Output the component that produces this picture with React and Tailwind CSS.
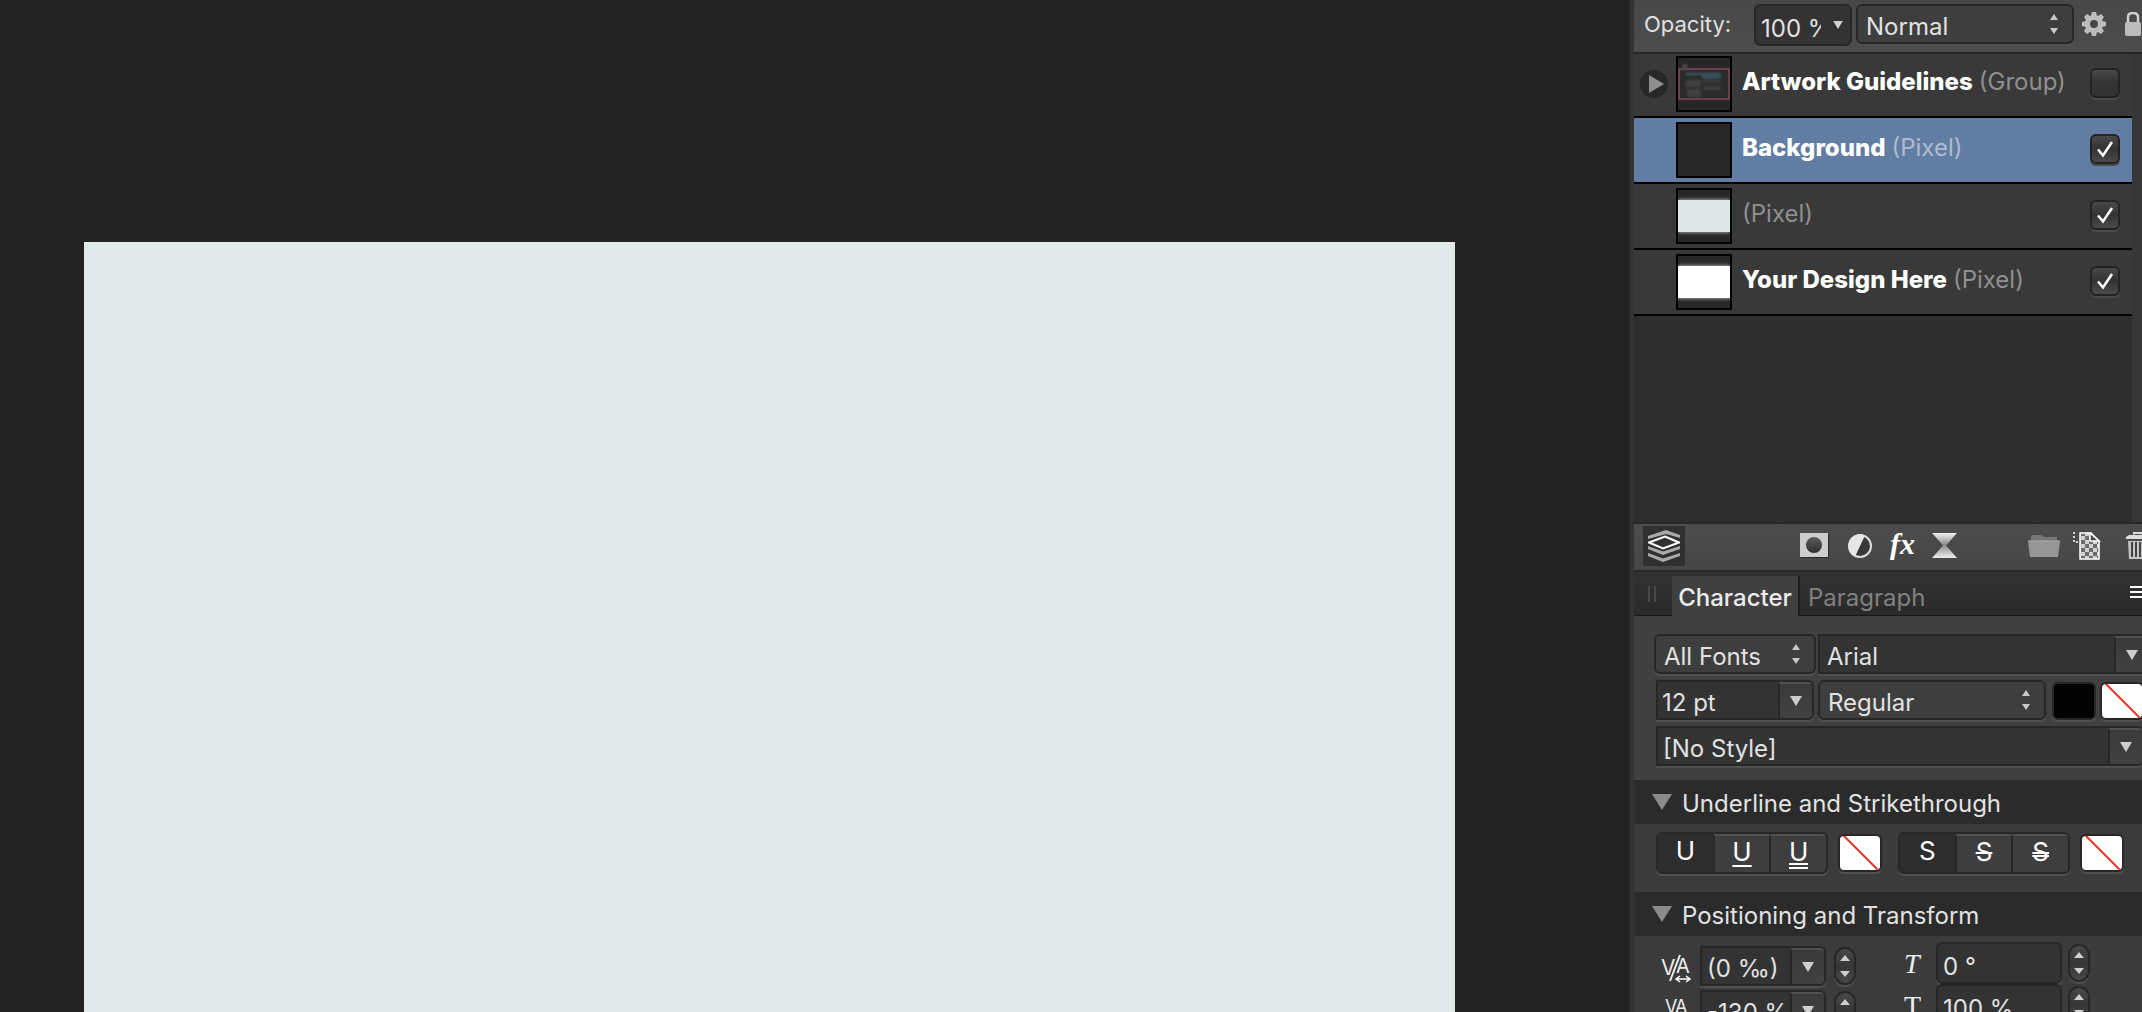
import React from 'react';
import clsx from 'clsx';

const LAYERS = [
  { id: 'guides', name: 'Artwork Guidelines', kind: '(Group)', thumb: 'guides', visible: false, group: true },
  { id: 'background', name: 'Background', kind: '(Pixel)', thumb: 'dark', visible: true, selected: true },
  { id: 'pixel', name: '', kind: '(Pixel)', thumb: 'mint', visible: true },
  { id: 'design', name: 'Your Design Here', kind: '(Pixel)', thumb: 'white', visible: true },
];

const BOX = 'border-2 border-[#272727] shadow-[0_2px_0_#505050]';

function Caret({ className }) {
  return (
    <svg viewBox="0 0 12 10" className={clsx('shrink-0', className)} fill="#cfcfcf">
      <path d="M0 0h12L6 10z" />
    </svg>
  );
}

function UpDown({ className }) {
  return (
    <svg viewBox="0 0 8 20" className={clsx('h-5 w-2 shrink-0', className)} fill="#c8c8c8">
      <path d="M0 6h8L4 0zM0 14h8l-4 6z" />
    </svg>
  );
}

function Select({ label, value, className }) {
  return (
    <div className={clsx('relative h-10 shrink-0', className)}>
      <select
        aria-label={label}
        defaultValue={value}
        className={clsx(BOX, 'h-full w-full appearance-none rounded-md bg-[#3e3e3e] pt-[6px] pl-2 text-2xl leading-7 text-[#e2e2e2] outline-none')}
      >
        <option>{value}</option>
      </select>
      <UpDown className="pointer-events-none absolute top-[10px] right-4" />
    </div>
  );
}

function Combo({ label, value, className, inputClass = 'pl-2' }) {
  return (
    <div className={clsx(BOX, 'flex h-10 shrink-0 overflow-hidden rounded-r-md bg-[#333]', className)}>
      <input
        aria-label={label}
        defaultValue={value}
        className={clsx('min-w-0 flex-1 bg-transparent pt-[6px] text-2xl leading-7 text-[#e2e2e2] outline-none', inputClass)}
      />
      <button
        aria-label={`${label} options`}
        className="flex w-[34px] shrink-0 items-center justify-center border-t-2 border-l-2 border-t-[#505050] border-l-[#272727] bg-linear-to-b from-[#3a3a3a] to-[#424242]"
      >
        <Caret className="h-[10px] w-3" />
      </button>
    </div>
  );
}

function Stepper({ label }) {
  return (
    <button aria-label={label} className={clsx(BOX, 'flex h-[38px] w-[22px] shrink-0 items-center justify-center rounded-full bg-linear-to-b from-[#484848] via-[#363636] to-[#484848]')}>
      <svg viewBox="0 0 10 22" className="h-[22px] w-[10px] shrink-0" fill="#cfcfcf">
        <path d="M0 6h10L5 0zM0 16h10l-5 6z" />
      </svg>
    </button>
  );
}

function NoneSwatch({ label }) {
  return (
    <button aria-label={label} className={clsx(BOX, 'block h-[38px] w-11 shrink-0 overflow-hidden rounded-md bg-white')}>
      <svg viewBox="0 0 40 34" className="h-full w-full">
        <path d="M3 -1L39 35" stroke="#ee3124" strokeWidth="2" />
      </svg>
    </button>
  );
}

function Thumb({ type }) {
  return (
    <div className="flex size-14 shrink-0 items-center overflow-hidden border-2 border-black bg-[#272727]">
      {type === 'guides' && (
        <svg viewBox="0 0 52 52" className="size-[52px]">
          <defs>
            <filter id="soft"><feGaussianBlur stdDeviation="1" /></filter>
          </defs>
          <rect x="1" y="11" width="50" height="30" fill="#2b2b2c" stroke="#87455f" strokeWidth="1.5" />
          <g filter="url(#soft)">
            <path d="M8 16h34" stroke="#3c5f6b" strokeWidth="2" />
            <path d="M24 19h19" stroke="#3f6974" strokeWidth="2" />
            <path d="M8 22h15v7H8zM8 31h15v8H10z" fill="#404142" />
            <path d="M25 22h17v3H25zM25 28h18v4H25z" fill="#3c3d3f" />
            <circle cx="7" cy="9" r="3" fill="#4a4a4a" />
          </g>
        </svg>
      )}
      {type === 'mint' && <div className="h-8 w-full bg-[#e0e7e8] shadow-[0_0_4px_#c8d0d0]" />}
      {type === 'white' && <div className="h-8 w-full bg-white shadow-[0_0_4px_#dddddd]" />}
    </div>
  );
}

function LayerRow({ layer }) {
  return (
    <li
      className={clsx(
        'flex h-[66px] items-end border-b-2 border-black pr-3 first:h-16',
        layer.selected ? 'bg-[#617da4]' : 'bg-[#393939]'
      )}
    >
      <div className="w-[42px] shrink-0 self-end pb-[18px] pl-[6px]">
        {layer.group && (
          <button aria-label="Expand group" className="flex size-7 items-center justify-center rounded-full bg-[#282828]">
            <svg viewBox="0 0 28 28" className="size-7" fill="#8e8e8e">
              <path d="M9 5v18l15-9z" />
            </svg>
          </button>
        )}
      </div>
      <div className="pb-1">
        <Thumb type={layer.thumb} />
      </div>
      <label htmlFor={layer.id} className="flex-1 pb-[18px] pl-[10px] text-2xl leading-8 whitespace-nowrap">
        {layer.name && <span className="mr-[6px] font-extrabold text-white">{layer.name}</span>}
        <span className={layer.selected ? 'text-[#aebbd0]' : 'text-[#8f8f8f]'}>{layer.kind}</span>
      </label>
      <div className="relative mb-[18px] size-[30px] shrink-0">
        <input
          id={layer.id}
          type="checkbox"
          defaultChecked={layer.visible}
          className="peer block size-[30px] appearance-none rounded-md border-2 border-[#232323] bg-linear-to-b from-[#484848] via-[#343434] to-[#333] shadow-[0_2px_0_#4a4a4a] checked:to-[#4a4a4a]"
        />
        <svg viewBox="0 0 30 30" className="pointer-events-none absolute inset-0 hidden size-[30px] peer-checked:block" fill="none" stroke="white" strokeWidth="2.5">
          <path d="M8 15.500l5 6L22 8" />
        </svg>
      </div>
    </li>
  );
}

function LayersIcon() {
  return (
    <svg viewBox="0 0 32 32" className="size-8">
      <path d="M0 6L18 0l14 5v3L18 4 0 9z" fill="#a9a9a9" />
      <path d="M17 6.500L31 12.500 15 18.500 1 12.500z" fill="#303030" stroke="#fff" strokeWidth="2" />
      <path d="M0 16l15 5.500L32 16v3l-17 6-15-6zM0 23l15 5.500L32 23v3l-17 6-15-6z" fill="#a9a9a9" />
    </svg>
  );
}

function MaskIcon() {
  return (
    <svg viewBox="0 0 30 26" className="h-[26px] w-[30px]">
      <defs>
        <linearGradient id="ball" x1="0" y1="0" x2="0" y2="1">
          <stop offset="0" stopColor="#5c5c5c" />
          <stop offset="1" stopColor="#2f2f2f" />
        </linearGradient>
      </defs>
      <path d="M1 1h28v24H1z" fill="#292929" />
      <path d="M0 0h28v24H0z" fill="#cdcdcd" />
      <circle cx="14" cy="12" r="8" fill="url(#ball)" />
    </svg>
  );
}

function AdjustIcon() {
  return (
    <svg viewBox="0 0 26 26" className="size-[26px]">
      <circle cx="12" cy="13" r="11" fill="#393939" stroke="#ddd" strokeWidth="2" />
      <path d="M17 2.500A11.500 11.500 0 1 0 7 23.500z" fill="#e6e6e6" />
    </svg>
  );
}

function HourglassIcon() {
  return (
    <svg viewBox="0 0 26 26" className="size-[26px]">
      <defs>
        <linearGradient id="glass" x1="0" y1="0" x2="0" y2="1">
          <stop offset="0" stopColor="#f2f2f2" />
          <stop offset=".48" stopColor="#8a8a8a" />
          <stop offset="1" stopColor="#eee" />
        </linearGradient>
      </defs>
      <path d="M0 0h25L14 12.500 25 25H0l11-12.500z" fill="url(#glass)" />
    </svg>
  );
}

function FolderIcon() {
  return (
    <svg viewBox="0 0 32 24" className="h-6 w-8">
      <path d="M3 8V3l1-2h10l2 2h13v5z" fill="#777" />
      <path d="M0 7h32l-2 16H2z" fill="#969696" />
      <path d="M0 7h32" stroke="#adadad" />
    </svg>
  );
}

function NewPixelIcon() {
  return (
    <svg viewBox="0 0 28 28" className="size-7">
      <defs>
        <pattern id="checker" width="8" height="8" patternUnits="userSpaceOnUse">
          <path d="M0 0h8v8H0z" fill="#d0d0d0" />
          <path d="M0 0h4v4H0zM4 4h4v4H4z" fill="#6c6c6c" />
        </pattern>
      </defs>
      <path d="M7 1h11l8 8v18H7z" fill="url(#checker)" stroke="#fff" strokeWidth="1.500" />
      <path d="M17 1v8h9z" fill="#444" stroke="#fff" strokeWidth="1.500" />
      <path d="M1 0v10h6" fill="none" stroke="#fff" strokeWidth="1.500" strokeDasharray="2 2" />
    </svg>
  );
}

function TrashIcon() {
  return (
    <svg viewBox="0 0 24 28" className="h-7 w-6">
      <path d="M8 2.500V1h8v1.500" fill="none" stroke="#ddd" strokeWidth="2" />
      <path d="M0 7V5l3-2h18l3 2v2z" fill="#ddd" />
      <path d="M2 9h20l-1 18H3z" fill="#c4c4c4" />
      <path d="M6 10v15M10 10v15M14 10v15M18 10v15" stroke="#444" strokeWidth="2" />
    </svg>
  );
}

function GearIcon() {
  return (
    <svg viewBox="-12 -12 24 24" className="size-6 shrink-0">
      <g fill="#bdbdbd">
        {[0, 45, 90, 135].map((angle) => (
          <path key={angle} d="M-2 -12h4l1 4v16l-1 4h-4l-1-4v-16z" transform={`rotate(${angle})`} />
        ))}
        <circle r="9" />
      </g>
      <circle r="4" fill="#484848" />
    </svg>
  );
}

function LockIcon() {
  return (
    <svg viewBox="0 0 16 24" className="h-6 w-4 shrink-0">
      <path d="M3 11V5q0-4 5-4t5 4v6" fill="none" stroke="#cfcfcf" strokeWidth="2.500" />
      <rect y="10" width="16" height="14" rx="2" fill="#bcbcbc" />
    </svg>
  );
}

function SpacingIcon({ kind }) {
  if (kind === 'tracking') {
    return (
      <svg viewBox="0 0 32 30" className="h-[30px] w-8" fill="#ededed">
        <text x="1" y="18" fontSize="18" className="font-['Inter']">V</text>
        <text x="11" y="18" fontSize="18" className="font-['Inter']">A</text>
        <path d="M3 25h20M6 22l-4 3 4 3M20 22l4 3-4 3" fill="none" stroke="#fff" strokeWidth="1.500" />
      </svg>
    );
  }
  return (
    <svg viewBox="0 0 32 30" className="h-[30px] w-8" fill="#ededed">
      <text x="1" y="22" fontSize="21" className="font-['Inter']">V</text>
      <text x="16" y="20" fontSize="20" className="font-['Inter']">A</text>
      <path d="M20 2L10 28" stroke="#ededed" strokeWidth="2" />
      <path d="M17 26h12M20 23l-4 3 4 3M26 23l4 3-4 3" fill="none" stroke="#fff" strokeWidth="1.500" />
    </svg>
  );
}

function SectionHeader({ children }) {
  return (
    <button className="flex h-11 w-full items-center gap-[10px] bg-[#2b2b2b] pl-[18px] text-left text-2xl leading-8 text-[#e2e2e2]">
      <svg viewBox="0 0 20 16" className="h-4 w-5" fill="#8b8b8b">
        <path d="M0 0h20L10 16z" />
      </svg>
      <span className="pt-1">{children}</span>
    </button>
  );
}

function Segments({ letter, styles, label }) {
  return (
    <div role="group" aria-label={label} className={clsx(BOX, 'flex h-[42px] w-[172px] shrink-0 overflow-hidden rounded-md bg-[#3e3e3e]')}>
      {styles.map((style, i) => (
        <button
          key={style}
          aria-pressed={i === 0}
          className={clsx(
            'flex-1 pb-1 text-[26px] leading-8 text-white',
            i === 0 ? 'bg-[#2d2d2d]' : 'border-t-2 border-l-2 border-t-[#505050] border-l-[#272727]'
          )}
        >
          <span className={style}>{letter}</span>
        </button>
      ))}
    </div>
  );
}

function LayersPanel() {
  return (
    <section>
      <div className="flex h-[54px] items-start border-b-2 border-[#262626] bg-linear-to-b from-[#484848] to-[#4c4c4c] pt-1 pl-[10px]">
        <label htmlFor="opacity" className="w-[110px] shrink-0 pt-1 text-[22px] leading-8 text-[#e0e0e0]">Opacity:</label>
        <div className={clsx(BOX, 'mr-1 flex h-[42px] w-[98px] shrink-0 items-center rounded-md bg-[#333]')}>
          <input id="opacity" defaultValue="100 %" className="w-[65px] bg-transparent pt-2 pl-[5px] text-2xl leading-7 text-[#e2e2e2] outline-none" />
          <button aria-label="Opacity slider" className="pl-3">
            <Caret className="h-2 w-[10px]" />
          </button>
        </div>
        <Select label="Blend mode" value="Normal" className="w-[218px]" />
        <button aria-label="Blend options" className="shrink-0 pt-2 pl-2"><GearIcon /></button>
        <button aria-label="Lock layer" className="shrink-0 pt-2 pl-[19px]"><LockIcon /></button>
      </div>

      <div className="h-[468px] bg-[#363636] pr-[10px]">
        <ul className="h-full bg-[#2e2e2e]">
          {LAYERS.map((layer) => <LayerRow key={layer.id} layer={layer} />)}
        </ul>
      </div>

      <div className="flex h-[50px] items-center border-y-2 border-[#282828] bg-linear-to-b from-[#4c4c4c] to-[#464646] pb-[2px] pl-[9px]">
        <button aria-label="Edit all layers" className="flex h-10 w-[42px] shrink-0 items-center justify-center bg-[#303030]"><LayersIcon /></button>
        <div className="ml-[115px] flex shrink-0 items-center">
          <button aria-label="Mask layer" className="w-12"><MaskIcon /></button>
          <button aria-label="Adjustments" className="w-10"><AdjustIcon /></button>
          <button aria-label="Layer effects" className="w-11 pb-1 pl-[2px] text-left font-['Liberation_Serif',serif] text-[30px] leading-8 font-bold text-white italic">fx</button>
          <button aria-label="Live filters" className="w-24"><HourglassIcon /></button>
          <button aria-label="Add group" className="w-[45px]"><FolderIcon /></button>
          <button aria-label="Add pixel layer" className="w-[53px]"><NewPixelIcon /></button>
          <button aria-label="Delete layer"><TrashIcon /></button>
        </div>
      </div>
    </section>
  );
}

function CharacterPanel() {
  return (
    <section className="bg-[#3b3b3b]">
      <div role="tablist" className="flex h-11 items-end bg-linear-to-b from-[#323232] to-[#2a2a2a] text-2xl leading-8 shadow-[inset_0_-1px_0_#191919]">
        <div className="h-[30px] w-[38px] shrink-0 pl-[14px]">
          <div className="h-4 w-2 border-x-2 border-[#484848]" />
        </div>
        <button role="tab" aria-selected="true" className="h-10 w-[126px] shrink-0 bg-[#404040] pt-1 font-medium text-[#ececec]">Character</button>
        <button role="tab" aria-selected="false" className="h-10 border-l-2 border-[#1e1e1e] pt-1 pl-2 text-[#808080]">Paragraph</button>
        <button aria-label="Panel menu" className="mr-[-8px] mb-4 ml-auto shrink-0">
          <svg viewBox="0 0 20 16" className="block h-4 w-5" stroke="#fff" strokeWidth="2">
            <path d="M0 3h20M0 8h20M0 13h20" />
          </svg>
        </button>
      </div>

      <div className="flex flex-col gap-[6px] bg-[#404040] pt-[18px] pb-[14px] pl-5">
        <div className="flex gap-[2px]">
          <Select label="Font collection" value="All Fonts" className="w-[162px]" />
          <Combo label="Font family" value="Arial" className="w-[332px]" inputClass="pl-[7px]" />
        </div>
        <div className="flex gap-1 pl-[2px]">
          <Combo label="Font size" value="12 pt" className="w-[158px]" inputClass="pl-1" />
          <Select label="Font style" value="Regular" className="mr-[2px] w-[228px]" />
          <button aria-label="Font colour" className={clsx(BOX, 'mt-[2px] h-[38px] w-11 shrink-0 rounded-md bg-[#030303]')} />
          <div className="mt-[2px]"><NoneSwatch label="Background colour" /></div>
        </div>
        <div className="flex pl-[2px]">
          <Combo label="Character style" value="[No Style]" className="w-[488px]" inputClass="pl-[5px]" />
        </div>
      </div>

      <SectionHeader>Underline and Strikethrough</SectionHeader>
      <div className="flex items-center py-2 pb-[18px] pl-[22px]">
        <Segments
          letter="U"
          label="Underline"
          styles={['no-underline', 'underline decoration-2 underline-offset-4', 'inline-block h-7 border-b-[6px] border-double leading-[22px]']}
        />
        <div className="mr-4 ml-[10px] h-[38px]"><NoneSwatch label="Underline colour" /></div>
        <Segments
          letter="S"
          label="Strikethrough"
          styles={['no-underline', 'line-through decoration-2', 'line-through decoration-double decoration-2']}
        />
        <div className="ml-[10px] h-[38px]"><NoneSwatch label="Strikethrough colour" /></div>
      </div>

      <SectionHeader>Positioning and Transform</SectionHeader>
      <div className="flex items-start pl-[26px]">
        <div className="flex flex-col gap-1 pt-[10px]">
          <div className="flex items-center">
            <span className="w-10 pt-1"><SpacingIcon kind="kerning" /></span>
            <Combo label="Kerning" value="(0 ‰)" className="mr-2 w-[126px]" inputClass="pl-[5px]" />
            <Stepper label="Step kerning" />
          </div>
          <div className="flex items-center">
            <span className="w-10 pl-1"><SpacingIcon kind="tracking" /></span>
            <Combo label="Tracking" value="-130 ‰" className="mr-2 w-[126px]" inputClass="pl-[5px]" />
            <Stepper label="Step tracking" />
          </div>
        </div>
        <div className="ml-[46px] flex flex-col pt-[6px]">
          {[
            { id: 'shear', mark: 'T', value: '0 °', slant: true },
            { id: 'scale', mark: 'T', value: '100 %' },
          ].map((row) => (
            <div key={row.id} className="flex h-[42px] items-start">
              <label htmlFor={row.id} className={clsx("w-[34px] shrink-0 pt-[6px] pl-[2px] font-['Liberation_Serif',serif] text-[28px] leading-8 text-[#ededed]", row.slant && 'italic')}>
                {row.mark}
              </label>
              <input id={row.id} defaultValue={row.value} className={clsx(BOX, 'mr-[6px] h-[42px] w-[126px] rounded-md bg-[#333] pt-[6px] pl-[5px] text-2xl leading-7 text-[#e2e2e2] outline-none')} />
              <div className="pt-[2px]"><Stepper label={`Step ${row.id}`} /></div>
            </div>
          ))}
        </div>
      </div>
    </section>
  );
}

export default function App() {
  return (
    <div className="flex h-screen overflow-hidden bg-[#222] font-['Inter','Liberation_Sans',sans-serif]">
      <main className="flex min-w-0 flex-1 pt-[242px] pr-[175px] pl-[84px]">
        <div className="flex-1 bg-[#e1eae9]" />
      </main>
      <aside className="w-[512px] shrink-0 overflow-hidden border-l-4 border-[#333] bg-[#3b3b3b]">
        <LayersPanel />
        <CharacterPanel />
      </aside>
    </div>
  );
}
